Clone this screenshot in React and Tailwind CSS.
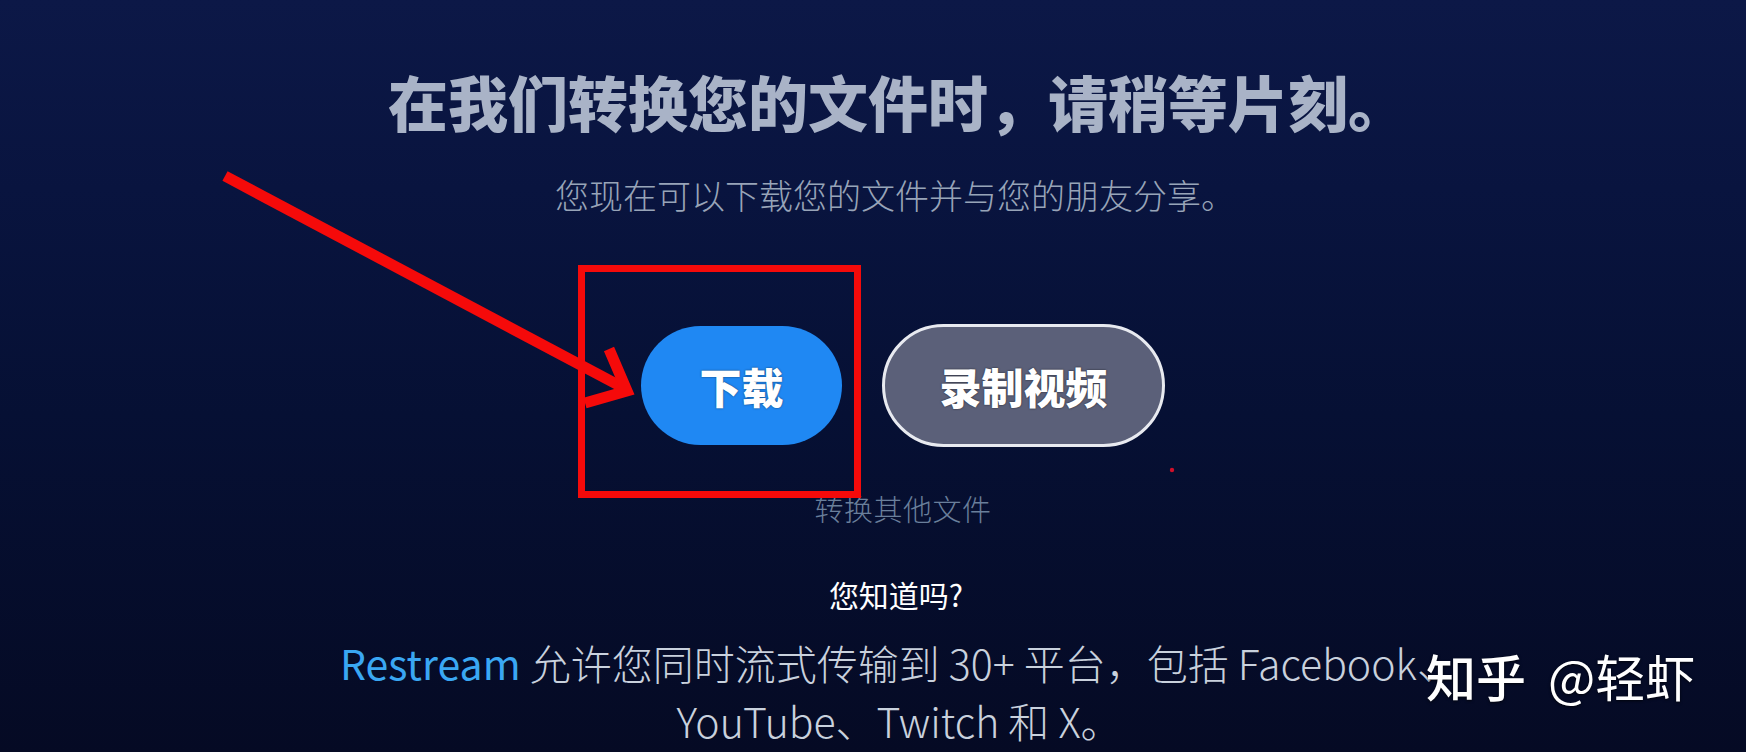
import React from "react";

export default function App() {
  return (
    <div
      className="relative w-full h-[752px] overflow-hidden bg-[linear-gradient(180deg,#0c1847_0%,#09143f_25%,#061034_55%,#050a24_100%)]"
      style={{ fontFamily: '"Noto Sans CJK SC", "Noto Sans", sans-serif' }}
    >
      <div className="flex flex-col items-center pl-[44px] pt-[71px]">
        <h1 className="ml-[6px] text-[60px] leading-none font-black text-[#a9b3c7] whitespace-nowrap">
          在我们转换您的文件时，请稍等片刻。
        </h1>
        <p className="mt-[47px] text-[34px] leading-none font-light text-[#98a4b8] whitespace-nowrap">
          您现在可以下载您的文件并与您的朋友分享。
        </p>
        <div className="mt-[112px] ml-[16px] flex items-center gap-[40px]">
          <button className="w-[201px] h-[119px] rounded-full bg-[#1f88f3] text-white text-[42px] font-black leading-none [text-shadow:0_0_2px_rgba(0,0,0,0.6)]">
            下载
          </button>
          <button className="w-[283px] h-[123px] rounded-full bg-[#5b6079] border-[3px] border-[#e8eaf0] text-white text-[42px] font-black leading-none [text-shadow:0_0_2px_rgba(0,0,0,0.7)]">
            录制视频
          </button>
        </div>
        <p className="mt-[47px] ml-[16px] text-[29px] leading-none font-light text-[#6a7f9b] tracking-[0.5px] whitespace-nowrap">
          转换其他文件
        </p>
        <p className="mt-[56px] ml-[2px] text-[30px] leading-none text-white whitespace-nowrap">
          您知道吗?
        </p>
        <p className="mt-[24px] ml-[8px] text-center text-[41px] leading-[58px] font-light text-[#c9d1dd] whitespace-nowrap">
          <span className="text-[#3aa7f3] font-normal">Restream</span> 允许您同时流式传输到 30+ 平台，包括 Facebook、
          <br />
          YouTube、Twitch 和 X。
        </p>
      </div>

      {/* annotations */}
      <svg
        className="absolute inset-0 pointer-events-none"
        width="1746"
        height="752"
        viewBox="0 0 1746 752"
      >
        <rect
          x="581.5"
          y="268.5"
          width="276"
          height="226"
          fill="none"
          stroke="#f50a0a"
          strokeWidth="7"
        />
        <line
          x1="225"
          y1="176"
          x2="622"
          y2="387"
          stroke="#f50a0a"
          strokeWidth="11"
        />
        <polyline
          points="609,349 627,391 585,403"
          fill="none"
          stroke="#f50a0a"
          strokeWidth="11"
          strokeLinejoin="miter"
        />
        <circle cx="1172" cy="470" r="2.2" fill="#d0102a" />
      </svg>

      <div className="absolute left-[1426px] top-[650px] flex items-center gap-[22px] text-[50px] leading-none text-white whitespace-nowrap [text-shadow:0_1px_3px_rgba(0,0,0,0.7)]">
        <span className="font-medium">知乎</span>
        <span>@轻虾</span>
      </div>
    </div>
  );
}
